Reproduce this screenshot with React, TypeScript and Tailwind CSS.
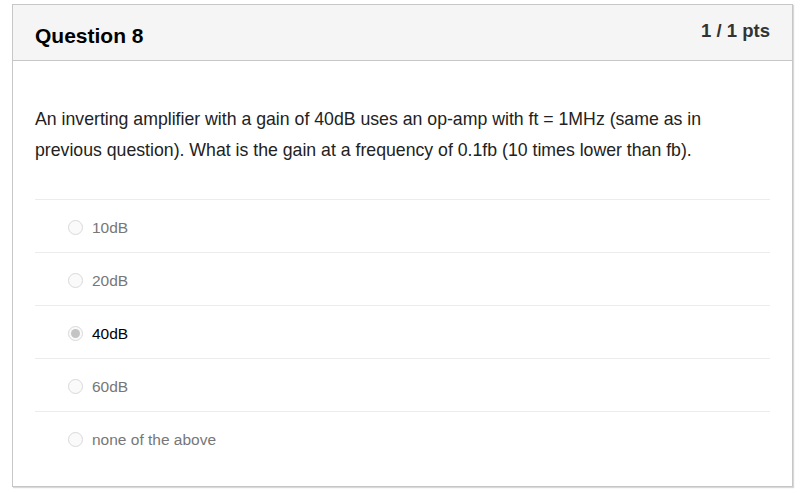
import React from 'react';

const answers = [
  { label: '10dB', selected: false },
  { label: '20dB', selected: false },
  { label: '40dB', selected: true },
  { label: '60dB', selected: false },
  { label: 'none of the above', selected: false },
];

function Radio({ checked }: { checked: boolean }) {
  return (
    <span className="flex h-[15px] w-[15px] items-center justify-center rounded-full border border-[#d9d9d9] bg-[#fafafa]">
      {checked && <span className="h-[9px] w-[9px] rounded-full bg-[#c4c4c4]" />}
    </span>
  );
}

export default function App() {
  return (
    <div className="h-[493px] w-[802px] bg-white pl-[12px] pt-[4px] font-['Liberation_Sans',Arial,sans-serif]">
      <div className="flex h-[483px] w-[781px] flex-col border border-[#c7c7c7] shadow-[1px_1px_1px_rgba(0,0,0,0.15)]">
        {/* header */}
        <div className="flex h-[56px] shrink-0 items-center justify-between border-b border-[#c7c7c7] bg-[#f5f5f5] pl-[22px] pr-[22px]">
          <h2 className="pt-[6px] text-[21px] font-bold text-black">Question 8</h2>
          <span className="pb-[4px] text-[18.5px] font-bold text-[#333]">1 / 1 pts</span>
        </div>

        {/* body */}
        <div className="px-[22px] pt-[43px]">
          <p className="text-[17.7px] leading-[31px] text-[#222]">
            An inverting amplifier with a gain of 40dB uses an op-amp with ft = 1MHz (same as in
            <br />
            previous question). What is the gain at a frequency of 0.1fb (10 times lower than fb).
          </p>

          <div className="mt-[33px] w-[735px]">
            {answers.map((a) => (
              <div key={a.label} className="flex h-[53px] items-center border-t border-[#ececec]">
                <div className="ml-[33px] mr-[9px] pt-[3px]">
                  <Radio checked={a.selected} />
                </div>
                <span className={`pt-[3px] text-[15.5px] ${a.selected ? 'text-black' : 'text-[#777]'}`}>{a.label}</span>
              </div>
            ))}
          </div>
        </div>
      </div>
    </div>
  );
}
